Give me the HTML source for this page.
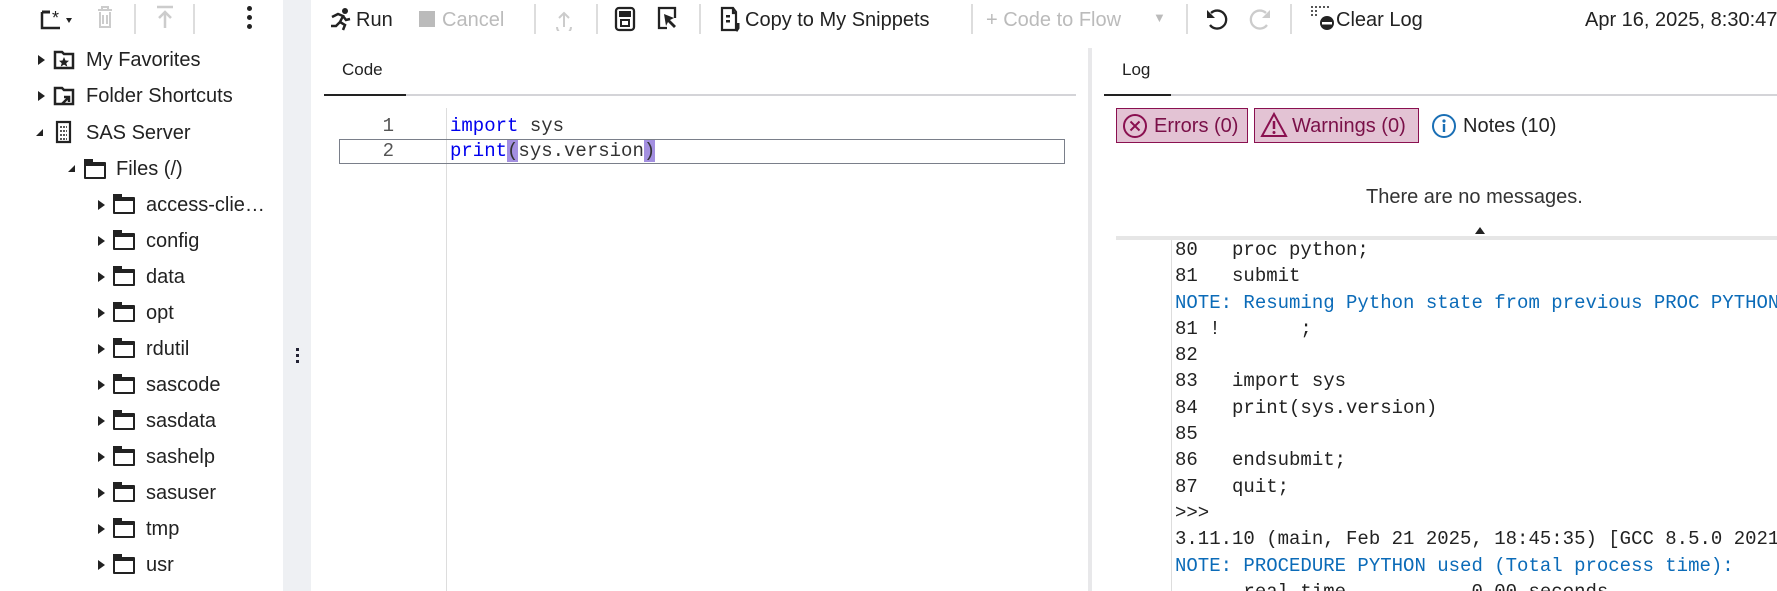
<!DOCTYPE html>
<html><head><meta charset="utf-8"><style>
*{margin:0;padding:0;box-sizing:border-box}
body{width:1777px;height:591px;overflow:hidden;background:#fff;font-family:"Liberation Sans",sans-serif;color:#222;position:relative}
.a{position:absolute;white-space:pre}
.t{font-size:20px;line-height:24px}
.g{color:#bbb}
.sep{position:absolute;top:4px;width:2px;height:30px;background:#ddd}
.mono{font-family:"Liberation Mono",monospace;font-size:19px}
.row{position:absolute;font-size:20px;line-height:24px;white-space:nowrap}
.tri{position:absolute;width:0;height:0;border-top:5px solid transparent;border-bottom:5px solid transparent;border-left:7px solid #222}
.fold{position:absolute;width:22px;height:17px;border:2px solid #222;border-top-width:4px;border-radius:1px}
.fold:before{content:"";position:absolute;left:-2px;top:-7px;width:9px;height:4px;background:#222}
.log{white-space:normal}
.log div{height:26.3px;line-height:26.3px;white-space:pre}
.note{color:#0b6bb8}
</style></head><body>
<!-- left panel -->
<div class="a" style="left:283px;top:0;width:28px;height:591px;background:#eef0f3"></div>
<div class="a" style="left:296px;top:348px;width:3px;height:3px;background:#223;box-shadow:0 6px #223,0 12px #223"></div>
<svg class="a" style="left:38px;top:6px" width="40" height="26" viewBox="0 0 40 26"><path d="M4 6v16h18" stroke="#222" stroke-width="2.5" fill="none"/><path d="M4 6h8" stroke="#222" stroke-width="3"/><text x="14" y="18" font-size="18" font-family="Liberation Sans" fill="#222">*</text><path d="M28 12l6 0-3 5z" fill="#222"/></svg>
<svg class="a" style="left:96px;top:5px" width="18" height="24"><path d="M2 5h14M6 5V2h6v3M4 7v15h10V7M7 10v9M11 10v9" stroke="#ccc" stroke-width="2" fill="none"/></svg>
<div class="sep" style="left:134px"></div>
<svg class="a" style="left:155px;top:4px" width="20" height="26"><path d="M2 3h16M10 24V8M4 14l6-6 6 6" stroke="#ccc" stroke-width="2.5" fill="none"/></svg>
<div class="sep" style="left:193px"></div>
<div class="a" style="left:247px;top:6px;width:5px;height:5px;border-radius:50%;background:#222;box-shadow:0 9px #222,0 18px #222"></div>

<div class="tri" style="left:38px;top:55px"></div>
<svg class="a" style="left:53px;top:48px" width="22" height="22"><path d="M2 4h7l2 2h9v14H2z" fill="none" stroke="#222" stroke-width="2.5"/><path d="M11 9l1.5 3.5 3.5.3-2.7 2.3 1 3.5-3.3-2-3.3 2 1-3.5L6 12.8l3.5-.3z" fill="#222"/></svg>
<div class="row" style="left:86px;top:48px">My Favorites</div>
<div class="tri" style="left:38px;top:91px"></div>
<svg class="a" style="left:53px;top:84px" width="22" height="22"><path d="M2 4h7l2 2h9v14H2z" fill="none" stroke="#222" stroke-width="2.5"/><path d="M9 20l6-6M11 13h5v5" stroke="#222" stroke-width="2.5" fill="none"/></svg>
<div class="row" style="left:86px;top:84px">Folder Shortcuts</div>
<div class="a" style="left:36px;top:129px;border-left:7px solid transparent;border-bottom:7px solid #222"></div>
<svg class="a" style="left:55px;top:120px" width="18" height="24"><path d="M2 2h13v20H2z" fill="none" stroke="#222" stroke-width="2.2"/><path d="M5 7h7M5 11h7M5 15h7M5 19h7" stroke="#222" stroke-width="1.5" stroke-dasharray="2 1"/></svg>
<div class="row" style="left:86px;top:121px">SAS Server</div>
<div class="a" style="left:68px;top:165px;border-left:7px solid transparent;border-bottom:7px solid #222"></div>
<div class="fold" style="left:84px;top:162px"></div>
<div class="row" style="left:116px;top:157px">Files (/)</div>

<div class="tri" style="left:98px;top:200px"></div><div class="fold" style="left:113px;top:197px"></div><div class="row" style="left:146px;top:193px">access-clie…</div>
<div class="tri" style="left:98px;top:236px"></div><div class="fold" style="left:113px;top:233px"></div><div class="row" style="left:146px;top:229px">config</div>
<div class="tri" style="left:98px;top:272px"></div><div class="fold" style="left:113px;top:269px"></div><div class="row" style="left:146px;top:265px">data</div>
<div class="tri" style="left:98px;top:308px"></div><div class="fold" style="left:113px;top:305px"></div><div class="row" style="left:146px;top:301px">opt</div>
<div class="tri" style="left:98px;top:344px"></div><div class="fold" style="left:113px;top:341px"></div><div class="row" style="left:146px;top:337px">rdutil</div>
<div class="tri" style="left:98px;top:380px"></div><div class="fold" style="left:113px;top:377px"></div><div class="row" style="left:146px;top:373px">sascode</div>
<div class="tri" style="left:98px;top:416px"></div><div class="fold" style="left:113px;top:413px"></div><div class="row" style="left:146px;top:409px">sasdata</div>
<div class="tri" style="left:98px;top:452px"></div><div class="fold" style="left:113px;top:449px"></div><div class="row" style="left:146px;top:445px">sashelp</div>
<div class="tri" style="left:98px;top:488px"></div><div class="fold" style="left:113px;top:485px"></div><div class="row" style="left:146px;top:481px">sasuser</div>
<div class="tri" style="left:98px;top:524px"></div><div class="fold" style="left:113px;top:521px"></div><div class="row" style="left:146px;top:517px">tmp</div>
<div class="tri" style="left:98px;top:560px"></div><div class="fold" style="left:113px;top:557px"></div><div class="row" style="left:146px;top:553px">usr</div>

<!-- main toolbar -->
<svg class="a" style="left:328px;top:7px" width="24" height="24"><circle cx="17" cy="4" r="3" fill="#222"/><path d="M4 10l6-3 5 2-3 6 5 3-2 5M12 15l-4 4H3M15 9l3 4 4-1" stroke="#222" stroke-width="2.5" fill="none"/></svg>
<div class="a t" style="left:356px;top:8px">Run</div>
<div class="a" style="left:419px;top:11px;width:16px;height:16px;background:#bbb"></div>
<div class="a t g" style="left:442px;top:8px">Cancel</div>
<div class="sep" style="left:534px"></div>
<svg class="a" style="left:555px;top:7px" width="18" height="24"><path d="M9 20V6M4 11l5-5 5 5M2 20a7 7 0 0 0 14 0" stroke="#ccc" stroke-width="2" fill="none"/></svg>
<div class="sep" style="left:596px"></div>
<svg class="a" style="left:614px;top:6px" width="22" height="26"><rect x="2" y="2" width="18" height="22" rx="3" fill="none" stroke="#222" stroke-width="2.3"/><rect x="5" y="5" width="12" height="6" fill="#222"/><rect x="7" y="14" width="8" height="6" fill="none" stroke="#222" stroke-width="2"/></svg>
<svg class="a" style="left:657px;top:6px" width="22" height="26"><path d="M18 12V2H2v20h8" fill="none" stroke="#222" stroke-width="2.3"/><path d="M7 8l10 4-4 2 6 6-2 2-6-6-2 4z" fill="#222"/></svg>
<div class="sep" style="left:699px"></div>
<svg class="a" style="left:720px;top:6px" width="22" height="26"><path d="M13 2H2v22h14V6zM13 2v5h4" fill="none" stroke="#222" stroke-width="2.2"/><rect x="6" y="9" width="4" height="2.5" fill="#222"/><rect x="6" y="14" width="4" height="2.5" fill="#222"/><path d="M18 17v5l-2 3" stroke="#222" stroke-width="3" fill="none"/></svg>
<div class="a t" style="left:745px;top:8px">Copy to My Snippets</div>
<div class="sep" style="left:971px"></div>
<div class="a t g" style="left:986px;top:8px">+ Code to Flow</div>
<div class="a g" style="left:1153px;top:10px;font-size:13px">▼</div>
<div class="sep" style="left:1186px"></div>
<svg class="a" style="left:1205px;top:7px" width="24" height="24"><path d="M6 6a9 9 0 1 1-1 12" stroke="#222" stroke-width="2.3" fill="none"/><path d="M2 3v8h8z" fill="#222"/></svg>
<svg class="a" style="left:1248px;top:7px" width="24" height="24"><path d="M18 6a9 9 0 1 0 1 12" stroke="#ccc" stroke-width="2.3" fill="none"/><path d="M22 3v8h-8z" fill="#ccc"/></svg>
<div class="sep" style="left:1290px"></div>
<svg class="a" style="left:1309px;top:4px" width="26" height="28"><g fill="#555"><rect x="2" y="2" width="2" height="2"/><rect x="6" y="2" width="2" height="2"/><rect x="10" y="2" width="2" height="2"/><rect x="14" y="2" width="2" height="2"/><rect x="18" y="2" width="2" height="2"/><rect x="2" y="6" width="2" height="2"/><rect x="6" y="6" width="2" height="2"/><rect x="2" y="10" width="2" height="2"/><rect x="6" y="10" width="2" height="2"/></g><circle cx="18" cy="19" r="7" fill="#222"/><rect x="13" y="18" width="10" height="2.5" fill="#fff"/></svg>
<div class="a t" style="left:1336px;top:8px">Clear Log</div>
<div class="a t" style="left:1585px;top:8px">Apr 16, 2025, 8:30:47</div>

<!-- code pane -->
<div class="a" style="left:342px;top:60px;font-size:17px">Code</div>
<div class="a" style="left:324px;top:94px;width:752px;height:2px;background:#d4d4d8"></div>
<div class="a" style="left:324px;top:94px;width:82px;height:2px;background:#222"></div>
<div class="a" style="left:446px;top:108px;width:1px;height:483px;background:#ddd"></div>
<div class="a" style="left:339px;top:139px;width:726px;height:25px;border:1.5px solid #7a7f8a"></div>
<div class="a mono" style="left:370px;top:115px;width:24px;text-align:right;color:#555">1</div>
<div class="a mono" style="left:370px;top:140px;width:24px;text-align:right;color:#555">2</div>
<div class="a mono" style="left:450px;top:115px;color:#333"><span style="color:#0000ee">import</span> sys</div>
<div class="a mono" style="left:450px;top:140px;color:#333"><span style="color:#0000ee">print</span><span style="background:#a38fe0">(</span>sys.version<span style="background:#a38fe0">)</span></div>

<!-- divider -->
<div class="a" style="left:1088px;top:48px;width:4px;height:543px;background:#e8e8ea"></div>

<!-- log pane -->
<div class="a" style="left:1122px;top:60px;font-size:17px">Log</div>
<div class="a" style="left:1104px;top:94px;width:673px;height:2px;background:#d4d4d8"></div>
<div class="a" style="left:1104px;top:94px;width:67px;height:2px;background:#222"></div>
<div class="a" style="left:1116px;top:108px;width:132px;height:35px;background:#e3c3d4;border:1.5px solid #8a1050"></div>
<svg class="a" style="left:1122px;top:113px" width="26" height="26"><circle cx="13" cy="13" r="11" fill="none" stroke="#8a1050" stroke-width="2"/><path d="M8.5 8.5l9 9M17.5 8.5l-9 9" stroke="#8a1050" stroke-width="2"/></svg>
<div class="a t" style="left:1154px;top:114px;color:#7a1048">Errors (0)</div>
<div class="a" style="left:1254px;top:108px;width:165px;height:35px;background:#e3c3d4;border:1.5px solid #8a1050"></div>
<svg class="a" style="left:1260px;top:112px" width="28" height="26"><path d="M14 2L26 24H2z" fill="none" stroke="#8a1050" stroke-width="2"/><path d="M14 9v8" stroke="#8a1050" stroke-width="2.5"/><circle cx="14" cy="20.5" r="1.5" fill="#8a1050"/></svg>
<div class="a t" style="left:1292px;top:114px;color:#7a1048">Warnings (0)</div>
<svg class="a" style="left:1431px;top:113px" width="26" height="26"><circle cx="13" cy="13" r="11" fill="none" stroke="#1a6fb5" stroke-width="2"/><circle cx="13" cy="8" r="1.6" fill="#1a6fb5"/><path d="M13 11v8" stroke="#1a6fb5" stroke-width="2.4"/></svg>
<div class="a t" style="left:1463px;top:114px">Notes (10)</div>
<div class="a t" style="left:1366px;top:185px;color:#333">There are no messages.</div>
<div class="a" style="left:1116px;top:236px;width:661px;height:4px;background:#e6e6e6"></div>
<div class="a" style="left:1475px;top:227px;border-left:5px solid transparent;border-right:5px solid transparent;border-bottom:7px solid #222"></div>
<div class="a" style="left:1171px;top:240px;width:1px;height:351px;background:#ddd"></div>
<div class="a" style="left:1172px;top:240px;width:605px;height:351px;overflow:hidden;white-space:normal"><div class="mono log" style="position:absolute;left:3px;top:-3px;color:#222"><div>80   proc python;</div><div>81   submit</div><div class="note">NOTE: Resuming Python state from previous PROC PYTHON invocation.</div><div>81 !       ;</div><div>82</div><div>83   import sys</div><div>84   print(sys.version)</div><div>85</div><div>86   endsubmit;</div><div>87   quit;</div><div>&gt;&gt;&gt;</div><div>3.11.10 (main, Feb 21 2025, 18:45:35) [GCC 8.5.0 20210514]</div><div class="note">NOTE: PROCEDURE PYTHON used (Total process time):</div><div>      real time           0.00 seconds</div></div></div>
</body></html>
